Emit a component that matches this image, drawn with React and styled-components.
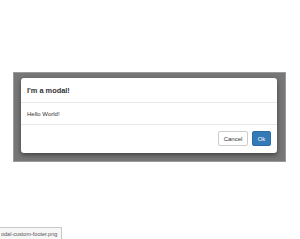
import React from 'react';
import styled, { createGlobalStyle } from 'styled-components';

const Global = createGlobalStyle`
  html, body {
    margin: 0;
    padding: 0;
    background: #fff;
    font-family: "Helvetica Neue", "Liberation Sans", Arial, sans-serif;
  }
`;

const Page = styled.div`
  position: relative;
  width: 300px;
  height: 239px;
  overflow: hidden;
  padding: 72px 0 0 13px;
  box-sizing: border-box;
`;

const Backdrop = styled.div`
  width: 273px;
  height: 90px;
  box-sizing: border-box;
  background: #777;
  border: 1px solid #9a9a9a;
  padding: 5px 8px 8px 7px;
`;

const Modal = styled.div`
  width: 256px;
  height: 75px;
  background: #fff;
  border-radius: 3px;
  box-shadow: 0 2px 5px rgba(0, 0, 0, 0.45);
  display: flex;
  flex-direction: column;
  color: #333;
`;

const Header = styled.div`
  height: 25px;
  display: flex;
  align-items: center;
  padding: 0 6px;
  border-bottom: 1px solid #e8e8e8;
  box-sizing: border-box;
`;

const Title = styled.div`
  font-size: 7.4px;
  font-weight: 700;
  color: #333;
`;

const Body = styled.div`
  height: 22px;
  display: flex;
  align-items: center;
  padding: 0 6px;
  border-bottom: 1px solid #e8e8e8;
  box-sizing: border-box;
  font-size: 6px;
`;

const Footer = styled.div`
  flex: 1;
  display: flex;
  align-items: center;
  justify-content: flex-end;
  gap: 4px;
  padding: 0 6px 1px;
`;

const Button = styled.button`
  height: 15px;
  padding: 0;
  width: ${p => (p.primary ? '19px' : '30px')};
  font-family: inherit;
  font-size: 6px;
  border-radius: 2px;
  border: 1px solid ${p => (p.primary ? '#2e6da4' : '#ccc')};
  background: ${p => (p.primary ? '#337ab7' : '#fff')};
  color: ${p => (p.primary ? '#fff' : '#333')};
`;

const FileTip = styled.div`
  position: absolute;
  left: -1px;
  bottom: 0;
  height: 11px;
  padding: 0 4px 0 1px;
  display: flex;
  align-items: center;
  background: #f7f7f7;
  border: 1px solid #c8c8c8;
  border-bottom: none;
  font-size: 5.5px;
  color: #555;
`;

export default function App() {
  return (
    <>
      <Global />
      <Page>
        <Backdrop>
          <Modal>
            <Header>
              <Title>I'm a modal!</Title>
            </Header>
            <Body>Hello World!</Body>
            <Footer>
              <Button>Cancel</Button>
              <Button primary>Ok</Button>
            </Footer>
          </Modal>
        </Backdrop>
        <FileTip>odal-custom-footer.png</FileTip>
      </Page>
    </>
  );
}
